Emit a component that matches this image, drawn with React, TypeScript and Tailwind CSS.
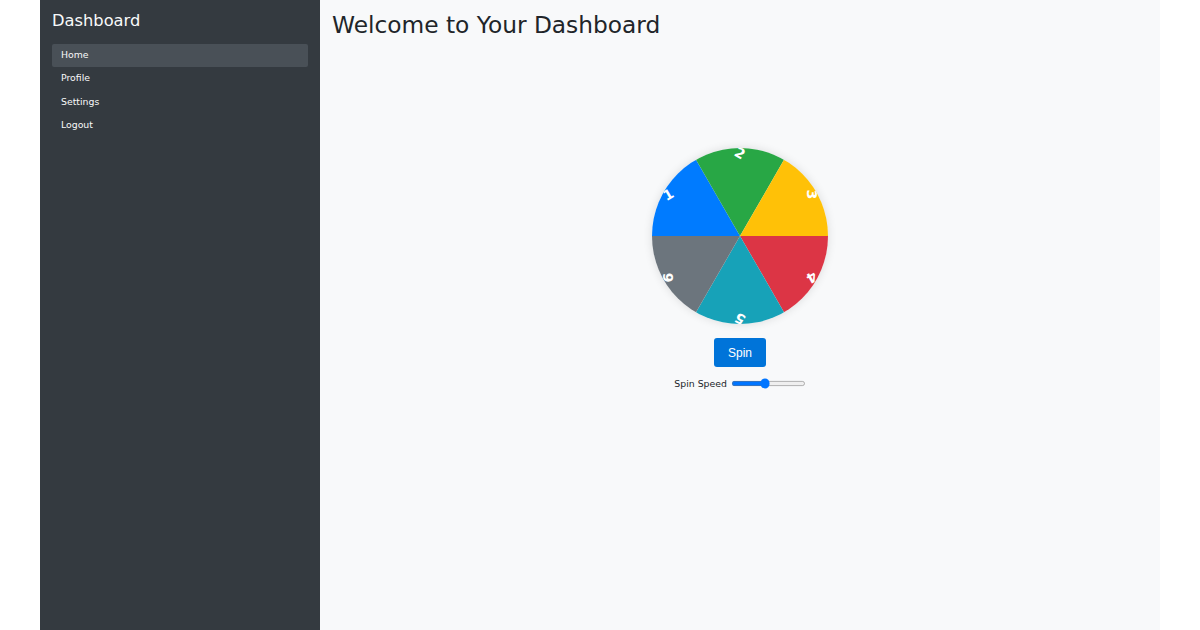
import React from "react";

const segments = [
  { label: "1", color: "#007bff", start: 180 },
  { label: "2", color: "#28a745", start: 240 },
  { label: "3", color: "#ffc107", start: 300 },
  { label: "4", color: "#dc3545", start: 0 },
  { label: "5", color: "#17a2b8", start: 60 },
  { label: "6", color: "#6c757d", start: 120 },
];

const navItems = ["Home", "Profile", "Settings", "Logout"];

const R = 88;

const pt = (deg: number, r: number) => {
  const a = (deg * Math.PI) / 180;
  return [R + r * Math.cos(a), R + r * Math.sin(a)];
};

const Wheel = () => {
  return (
    <div className="w-[176px] h-[176px] rounded-full shadow-[0_0_10px_rgba(0,0,0,0.12)]">
      <svg width="176" height="176" viewBox="0 0 176 176">
        <defs>
          <clipPath id="wheel-clip">
            <circle cx={R} cy={R} r={R} />
          </clipPath>
        </defs>
        <g clipPath="url(#wheel-clip)">
          {segments.map((s) => {
            const [x0, y0] = pt(s.start, R + 2);
            const [x1, y1] = pt(s.start + 60, R + 2);
            const mid = s.start + 30;
            const [tx, ty] = pt(mid, 83);
            return (
              <g key={s.label}>
                <path
                  d={`M${R},${R} L${x0},${y0} A${R + 2},${R + 2} 0 0 1 ${x1},${y1} Z`}
                  fill={s.color}
                />
                <text
                  x={tx}
                  y={ty}
                  fill="#fff"
                  fontSize="14"
                  fontWeight="bold"
                  fontFamily="'DejaVu Sans', sans-serif"
                  textAnchor="middle"
                  dominantBaseline="central"
                  transform={`rotate(${mid + 120} ${tx} ${ty})`}
                >
                  {s.label}
                </text>
              </g>
            );
          })}
        </g>
      </svg>
    </div>
  );
};

export default function App() {
  return (
    <div className="min-h-screen bg-white font-['DejaVu_Sans',sans-serif]">
      <div className="mx-auto flex w-[1120px] min-h-screen">
        <aside className="w-[280px] shrink-0 bg-[#343a40] px-[12px] text-[#f8f9fa]">
          <h2 className="pt-[9.5px] text-[16.3px] leading-[22px] font-normal">Dashboard</h2>
          <ul className="mt-[12.5px]">
            {navItems.map((item, i) => (
              <li
                key={item}
                className={`px-[9px] pt-[4px] pb-[6px] text-[9.33px] leading-[13.33px] rounded-[2px] ${
                  i === 0 ? "bg-[#495057]" : ""
                }`}
              >
                {item}
              </li>
            ))}
          </ul>
        </aside>
        <main className="flex-1 bg-[#f8f9fa] px-[12px]">
          <h1 className="pt-[11px] text-[23.3px] leading-[28px] text-[#212529] font-normal">
            Welcome to Your Dashboard
          </h1>
          <div className="mt-[109px] flex flex-col items-center">
            <Wheel />
            <button className="mt-[14px] h-[29px] w-[52px] rounded-[3px] bg-[#0074d9] text-[12px] text-white font-['Liberation_Sans',sans-serif]">
              Spin
            </button>
            <div className="mt-[9px] flex items-center gap-[4px]">
              <label className="pt-[1px] text-[9.33px] text-[#212529]">Spin Speed</label>
              <input
                type="range"
                min={1}
                max={10}
                defaultValue={5}
                className="w-[115px] [zoom:0.65] accent-[#0075ff]"
              />
            </div>
          </div>
        </main>
      </div>
    </div>
  );
}
